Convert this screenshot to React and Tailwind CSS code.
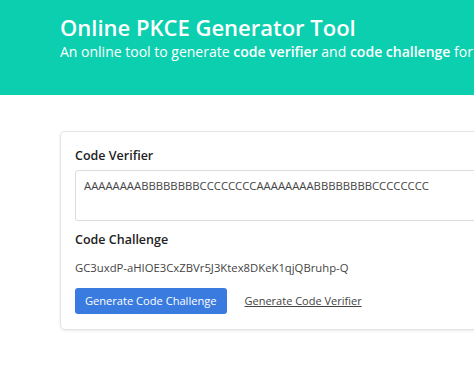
export default function App() {
  const font = { fontFamily: '"Open Sans", "Noto Sans", sans-serif' };
  return (
    <div className="w-[474px] h-[386px] overflow-hidden bg-white" style={font}>
      <div className="h-[95px] bg-[#0ccfb0] pl-[60px] pt-[12px] text-white whitespace-nowrap">
        <h1 className="text-[22px] font-semibold leading-[30px]">Online PKCE Generator Tool</h1>
        <p className="text-[14px] leading-[20px]">
          An online tool to generate <b className="font-semibold">code verifier</b> and <b className="font-semibold">code challenge</b> for PKCE
        </p>
      </div>
      <div className="pl-[60px] pt-[36px]">
        <div className="w-[480px] h-[199px] border border-[#e3e3e3] rounded-[5px] shadow-[0_1px_3px_rgba(0,0,0,0.08)] px-[14px] pt-[15px]">
          <div className="text-[12.5px] font-semibold text-[#222] leading-[18px]">Code Verifier</div>
          <div className="mt-[5px] h-[51px] border border-[#dcdcdc] rounded-[3px] px-[8px] pt-[6px] text-[11.3px] text-[#444] leading-[18px] whitespace-nowrap">
            AAAAAAAABBBBBBBBCCCCCCCCAAAAAAAABBBBBBBBCCCCCCCC
          </div>
          <div className="mt-[10px] text-[12.5px] font-semibold text-[#222] leading-[18px]">Code Challenge</div>
          <div className="mt-[10px] text-[11.3px] text-[#444] leading-[18px] whitespace-nowrap">GC3uxdP-aHIOE3CxZBVr5J3Ktex8DKeK1qjQBruhp-Q</div>
          <div className="mt-[11px] flex items-center gap-[18px]">
            <button className="h-[26px] px-[10px] bg-[#3a7be0] text-white rounded-[3px] text-[11.1px]">Generate Code Challenge</button>
            <span className="text-[11px] text-[#444] underline">Generate Code Verifier</span>
          </div>
        </div>
      </div>
    </div>
  );
}
